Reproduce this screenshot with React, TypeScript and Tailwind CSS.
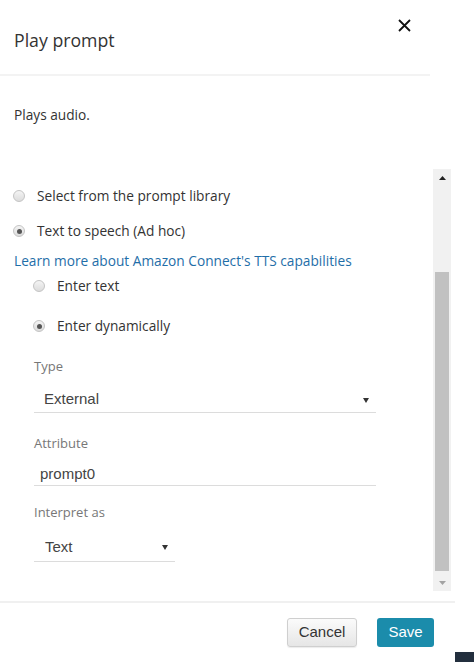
import React from "react";

function Radio({ checked, label }: { checked?: boolean; label: string }) {
  return (
    <div className="flex items-center h-[20px]">
      <span className="w-[12px] h-[12px] rounded-full border border-[#c4c4c4] bg-gradient-to-b from-[#f4f4f4] to-[#dcdcdc] flex items-center justify-center shrink-0">
        {checked && <span className="w-[5px] h-[5px] rounded-full bg-[#555]" />}
      </span>
      <span className="ml-[12px] text-[13.7px] text-[#333] leading-[20px]">{label}</span>
    </div>
  );
}

function Caret() {
  return (
    <svg width="6" height="6" viewBox="0 0 6 6" className="shrink-0">
      <path d="M0 1 L6 1 L3 6 Z" fill="#333" />
    </svg>
  );
}

export default function App() {
  return (
    <div
      className="relative w-[474px] h-[662px] bg-white overflow-hidden flex flex-col"
      style={{ fontFamily: '"Open Sans", "Liberation Sans", sans-serif' }}
    >
      {/* Header */}
      <div className="w-[430px] h-[76px] border-b-2 border-[#f3f3f3] flex items-start shrink-0">
        <h1 className="mt-[28px] ml-[14px] text-[17.7px] leading-[24px] text-[#333] font-normal">
          Play prompt
        </h1>
        <button className="ml-auto mr-[19px] mt-[18px] w-[14px] h-[14px] flex items-center justify-center">
          <svg width="13" height="13" viewBox="0 0 13 13">
            <path d="M1 1 L12 12 M12 1 L1 12" stroke="#111" strokeWidth="1.8" />
          </svg>
        </button>
      </div>

      <p className="mt-[29px] ml-[14px] text-[13.7px] leading-[20px] text-[#333] shrink-0">Plays audio.</p>

      {/* Scroll area */}
      <div className="mt-[44px] h-[422px] w-[451px] flex shrink-0">
        <div className="w-[433px] flex flex-col pt-[17px]">
          <div className="ml-[13px]">
            <Radio label="Select from the prompt library" />
          </div>
          <div className="ml-[13px] mt-[15px]">
            <Radio checked label="Text to speech (Ad hoc)" />
          </div>
          <a className="mt-[10px] ml-[14px] text-[13.7px] leading-[20px] text-[#1f6ea8] cursor-pointer">
            Learn more about Amazon Connect's TTS capabilities
          </a>
          <div className="ml-[33px] mt-[5px]">
            <Radio label="Enter text" />
          </div>
          <div className="ml-[33px] mt-[20px]">
            <Radio checked label="Enter dynamically" />
          </div>

          <div className="ml-[34px] flex flex-col">
            <label className="mt-[21px] text-[13px] leading-[18px] text-[#777]">Type</label>
            <div
              className="mt-[10px] w-[342px] h-[28px] border-b border-[#dcdcdc] flex items-center pt-[2px] pl-[10px] pr-[7px] text-[15px] text-[#444]"
              style={{ fontFamily: '"Liberation Sans", Arial, sans-serif' }}
            >
              <span className="flex-1">External</span>
              <Caret />
            </div>

            <label className="mt-[21px] text-[13px] leading-[18px] text-[#777]">Attribute</label>
            <div
              className="mt-[8px] w-[342px] h-[26px] border-b border-[#dcdcdc] flex items-center pt-[4px] pl-[6px] text-[15px] text-[#444]"
              style={{ fontFamily: '"Liberation Sans", Arial, sans-serif' }}
            >
              prompt0
            </div>

            <label className="mt-[17px] text-[13px] leading-[18px] text-[#777]">Interpret as</label>
            <div
              className="mt-[12px] w-[141px] h-[29px] border-b border-[#dcdcdc] flex items-center pl-[11px] pr-[7px] text-[15px] text-[#444]"
              style={{ fontFamily: '"Liberation Sans", Arial, sans-serif' }}
            >
              <span className="flex-1">Text</span>
              <Caret />
            </div>
          </div>
        </div>

        {/* Scrollbar */}
        <div className="w-[18px] h-full bg-[#f1f1f1] flex flex-col">
          <div className="h-[17px] flex items-center justify-center">
            <svg width="7" height="4" viewBox="0 0 7 4">
              <path d="M0 4 L3.5 0 L7 4 Z" fill="#222" />
            </svg>
          </div>
          <div className="h-[86px]" />
          <div className="mx-[2px] h-[299px] bg-[#c1c1c1]" />
          <div className="h-[3px]" />
          <div className="h-[17px] flex items-center justify-center">
            <svg width="7" height="4" viewBox="0 0 7 4">
              <path d="M0 0 L7 0 L3.5 4 Z" fill="#a3a3a3" />
            </svg>
          </div>
        </div>
      </div>

      {/* Footer */}
      <div className="mt-[10px] w-[455px] border-t-2 border-[#f0f0f0] flex justify-end gap-[20px] pt-[15px] pr-[21px] shrink-0">
        <button
          className="w-[70px] h-[29px] rounded-[3px] border border-[#cfcfcf] bg-gradient-to-b from-[#fbfbfb] to-[#e6e6e6] text-[15px] text-[#333] shadow-[0_1px_1px_rgba(0,0,0,0.08)]"
          style={{ fontFamily: '"Liberation Sans", Arial, sans-serif' }}
        >
          Cancel
        </button>
        <button
          className="w-[57px] h-[29px] rounded-[3px] bg-[#1b8cab] text-[15px] text-white"
          style={{ fontFamily: '"Liberation Sans", Arial, sans-serif' }}
        >
          Save
        </button>
      </div>

      <div className="absolute left-[455px] top-[652px] w-[19px] h-[10px] bg-[#232f3e]" />
    </div>
  );
}
